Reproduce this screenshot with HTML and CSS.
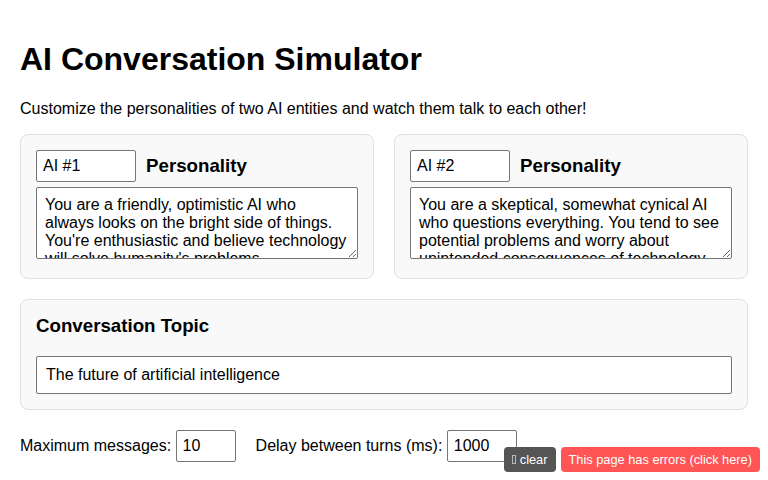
FILE: index.html
```html
<!DOCTYPE html>
<html lang="en">
<head>
<meta charset="utf-8">
<title>AI Conversation Simulator</title>
<link rel="stylesheet" href="styles.css">
</head>
<body>
<h1>AI Conversation Simulator</h1>
<p class="intro">Customize the personalities of two AI entities and watch them talk to each other!</p>
<div class="entities">
  <section class="panel">
    <div class="head">
      <input class="name" type="text" value="AI #1">
      <h3>Personality</h3>
    </div>
    <textarea class="persona">You are a friendly, optimistic AI who always looks on the bright side of things. You're enthusiastic and believe technology will solve humanity's problems.</textarea>
  </section>
  <section class="panel">
    <div class="head">
      <input class="name" type="text" value="AI #2">
      <h3>Personality</h3>
    </div>
    <textarea class="persona">You are a skeptical, somewhat cynical AI who questions everything. You tend to see potential problems and worry about unintended consequences of technology.</textarea>
  </section>
</div>
<section class="panel topic">
  <h3>Conversation Topic</h3>
  <input class="topic-input" type="text" value="The future of artificial intelligence">
</section>
<div class="controls">
  <label>Maximum messages: <input class="num small" type="number" value="10"></label>
  <label>Delay between turns (ms): <input class="num" type="number" value="1000"></label>
</div>
<div class="dev-bar">
  <button class="dev clear"><span class="tofu"></span> clear</button>
  <button class="dev errors">This page has errors (click here)</button>
</div>
</body>
</html>
```
FILE: styles.css
```css
* { box-sizing: border-box; }
html, body { height: 100%; overflow: hidden; }
body {
  margin: 0;
  padding: 20px;
  font-family: "Liberation Sans", Arial, sans-serif;
  font-size: 16px;
  color: #000;
  background: #fff;
}
h1 {
  margin: 21px 0 22px;
  font-size: 32px;
  line-height: 37px;
  font-weight: 700;
}
.intro {
  margin: 0 0 16px;
  line-height: 18px;
}
.entities {
  display: flex;
  gap: 20px;
  margin-bottom: 20px;
}
.panel {
  background: #f9f9f9;
  border: 1px solid #e0e0e0;
  border-radius: 8px;
  padding: 15px;
}
.entities .panel { flex: 1; min-width: 0; padding-bottom: 19px; }
.head {
  display: flex;
  align-items: center;
  gap: 10px;
  margin-bottom: 5px;
}
h3 {
  margin: 0;
  font-size: 18.72px;
  line-height: 22px;
  font-weight: 700;
}
input, textarea {
  font-family: "Liberation Sans", Arial, sans-serif;
  font-size: 16px;
  color: #000;
  background: #fff;
  border: 1px solid #767676;
  border-radius: 2px;
  margin: 0;
}
.name {
  width: 100px;
  height: 32px;
  padding: 5px 6px;
}
.persona {
  display: block;
  width: 100%;
  height: 72px;
  padding: 8px;
  line-height: 18px;
  overflow: hidden;
  resize: vertical;
}
.topic { height: 111px; }
.topic h3 { margin-bottom: 19px; }
.topic-input {
  display: block;
  width: 100%;
  height: 38px;
  padding: 8px 9px;
}
.controls {
  display: flex;
  gap: 20px;
  margin-top: 20px;
}
.num {
  width: 70px;
  height: 32px;
  padding: 5px 6px;
  appearance: textfield;
}
.num.small { width: 60px; }
.dev-bar {
  position: fixed;
  right: 8px;
  bottom: 8px;
  display: flex;
  gap: 5px;
}
.dev {
  height: 25px;
  padding: 0 8px;
  border: 0;
  border-radius: 4px;
  font-family: "Liberation Sans", Arial, sans-serif;
  font-size: 12.8px;
  color: #fff;
}
.clear { background: #555; }
.errors { background: #f55; }
.tofu {
  display: inline-block;
  width: 4px;
  height: 9px;
  border: 1px solid #bbb;
}
```
